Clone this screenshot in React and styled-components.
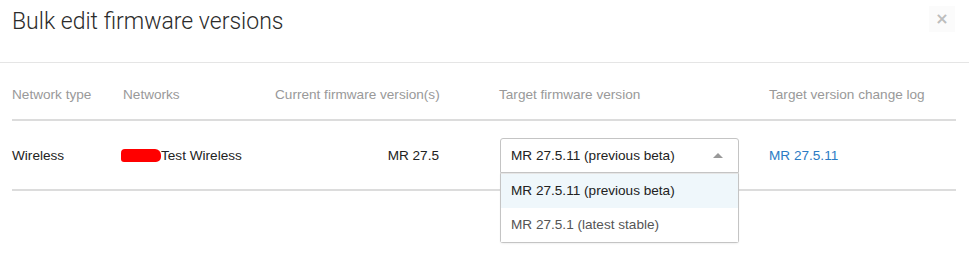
import React from 'react';
import styled, { createGlobalStyle } from 'styled-components';

const GlobalStyle = createGlobalStyle`
  body {
    margin: 0;
    background: #fff;
    font-family: "Liberation Sans", Arial, sans-serif;
    font-size: 13.6px;
    color: #222;
  }
`;

const Modal = styled.div`
  width: 969px;
  height: 258px;
  background: #fff;
  overflow: hidden;
`;

const Header = styled.div`
  height: 63px;
  border-bottom: 1px solid #e5e5e5;
  display: flex;
  align-items: flex-start;
  justify-content: space-between;
  padding: 0 14px 0 12px;
  box-sizing: border-box;
`;

const Title = styled.h1`
  margin: 8px 0 0;
  font-family: Roboto, "Liberation Sans", sans-serif;
  font-weight: 300;
  font-size: 23px;
  line-height: 28px;
  color: #2b2b2b;
`;

const Close = styled.button`
  margin-top: 6px;
  width: 26px;
  height: 26px;
  border: none;
  background: #fbfbfb;
  color: #bdbdbd;
  font-family: "DejaVu Sans", sans-serif;
  font-size: 16px;
  font-weight: bold;
  line-height: 1;
  display: flex;
  align-items: center;
  justify-content: center;
  padding: 0;
  cursor: pointer;
`;

const Body = styled.div`
  padding: 0 13px 0 12px;
`;

const Grid = styled.div`
  display: grid;
  grid-template-columns: 111px 152px 164px 330px 1fr;
`;

const HeadCell = styled.div`
  height: 58px;
  box-sizing: border-box;
  padding-top: 24px;
  color: #999;
  border-bottom: 2px solid #dcdcdc;
  text-align: ${p => (p.right ? 'right' : 'left')};
  padding-left: ${p => p.pl || 0}px;
  white-space: nowrap;
`;

const Cell = styled.div`
  height: 70px;
  box-sizing: border-box;
  border-bottom: 2px solid #dcdcdc;
  display: flex;
  align-items: center;
  justify-content: ${p => (p.right ? 'flex-end' : 'flex-start')};
  padding-left: ${p => p.pl || 0}px;
  color: #222;
  white-space: nowrap;
`;

const Redacted = styled.span`
  display: inline-block;
  width: 40px;
  height: 13px;
  background: #ff0000;
  border-radius: 4px 6px 5px 3px;
  margin-left: -2px;
`;

const SelectWrap = styled.div`
  position: relative;
  width: 239px;
`;

const SelectBox = styled.div`
  height: 35px;
  box-sizing: border-box;
  border: 1px solid #c4c4c4;
  border-radius: 3px 3px 0 0;
  display: flex;
  align-items: center;
  justify-content: space-between;
  padding: 0 10px;
  color: #222;
  background: #fff;
`;

const Caret = styled.span`
  width: 0;
  height: 0;
  border-left: 5px solid transparent;
  border-right: 5px solid transparent;
  border-bottom: 5px solid #999;
  margin-right: 5px;
`;

const Menu = styled.div`
  position: absolute;
  top: 35px;
  left: 0;
  right: 0;
  background: #fff;
  border: 1px solid #c4c4c4;
  border-top: 1px solid #e6e6e6;
  border-radius: 0 0 3px 3px;
  box-shadow: 0 1px 2px rgba(0, 0, 0, 0.06);
  z-index: 5;
`;

const Option = styled.div`
  height: 34px;
  display: flex;
  align-items: center;
  padding-left: 10px;
  background: ${p => (p.active ? '#eff7fb' : '#fff')};
  color: ${p => (p.active ? '#222' : '#555')};
`;

const Link = styled.a`
  color: #2b7bc4;
  text-decoration: none;
`;

export default function App() {
  return (
    <Modal>
      <GlobalStyle />
      <Header>
        <Title>Bulk edit firmware versions</Title>
        <Close aria-label="close">×</Close>
      </Header>
      <Body>
        <Grid>
          <HeadCell>Network type</HeadCell>
          <HeadCell>Networks</HeadCell>
          <HeadCell right>Current firmware version(s)</HeadCell>
          <HeadCell pl={60}>Target firmware version</HeadCell>
          <HeadCell>Target version change log</HeadCell>

          <Cell>Wireless</Cell>
          <Cell>
            <Redacted />
            Test Wireless
          </Cell>
          <Cell right>MR 27.5</Cell>
          <Cell pl={61}>
            <SelectWrap>
              <SelectBox>
                <span>MR 27.5.11 (previous beta)</span>
                <Caret />
              </SelectBox>
              <Menu>
                <Option active>MR 27.5.11 (previous beta)</Option>
                <Option>MR 27.5.1 (latest stable)</Option>
              </Menu>
            </SelectWrap>
          </Cell>
          <Cell>
            <Link href="#">MR 27.5.11</Link>
          </Cell>
        </Grid>
      </Body>
    </Modal>
  );
}
